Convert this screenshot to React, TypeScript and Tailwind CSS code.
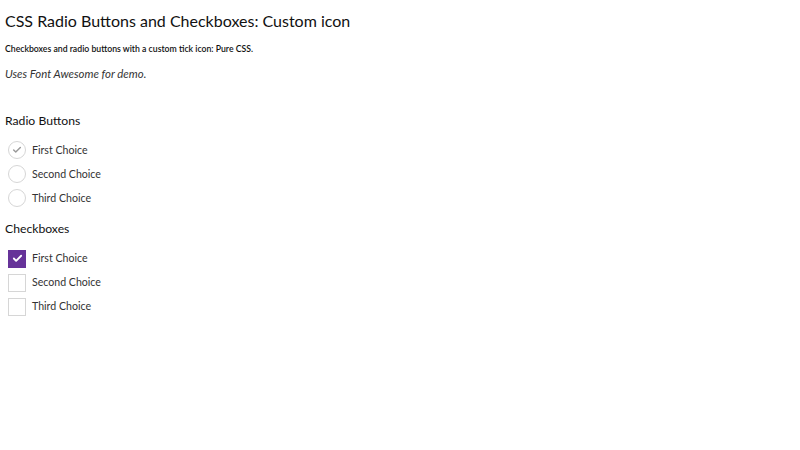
import { Check } from "lucide-react";

const radios = [
  { label: "First Choice", checked: true },
  { label: "Second Choice", checked: false },
  { label: "Third Choice", checked: false },
];

const boxes = [
  { label: "First Choice", checked: true },
  { label: "Second Choice", checked: false },
  { label: "Third Choice", checked: false },
];

function Radio({ label, checked }: { label: string; checked: boolean }) {
  return (
    <label className="flex h-6 items-center gap-[6px]">
      <span className="flex h-[18px] w-[18px] items-center justify-center rounded-full border border-[#d6d6d6] bg-white">
        {checked && <Check className="h-[10px] w-[10px] text-[#9a9a9a]" strokeWidth={3.5} />}
      </span>
      <span className="text-[10.6px] text-[#333]">{label}</span>
    </label>
  );
}

function Box({ label, checked }: { label: string; checked: boolean }) {
  return (
    <label className="flex h-6 items-center gap-[6px]">
      <span
        className={
          checked
            ? "flex h-[18px] w-[18px] items-center justify-center border border-[#663399] bg-[#663399]"
            : "flex h-[18px] w-[18px] items-center justify-center border border-[#d6d6d6] bg-white"
        }
      >
        {checked && <Check className="h-[11px] w-[11px] text-white" strokeWidth={4} />}
      </span>
      <span className="text-[10.6px] text-[#333]">{label}</span>
    </label>
  );
}

export default function App() {
  return (
    <div className="min-h-[450px] bg-white px-[5px] pt-[10px] font-['Lato',sans-serif] text-[#111]">
      <h1 className="text-[16px] leading-[22px]">CSS Radio Buttons and Checkboxes: Custom icon</h1>
      <p className="mt-[10px] text-[8.7px] font-semibold">Checkboxes and radio buttons with a custom tick icon: Pure CSS.</p>
      <p className="mt-[10px] text-[11.4px] italic text-[#333]">Uses Font Awesome for demo.</p>

      <h2 className="mt-[30px] text-[12.2px]">Radio Buttons</h2>
      <div className="mt-[8px] flex flex-col pl-[3px]">
        {radios.map((r) => (
          <Radio key={r.label} {...r} />
        ))}
      </div>

      <h2 className="mt-[10px] text-[12.2px]">Checkboxes</h2>
      <div className="mt-[8px] flex flex-col pl-[3px]">
        {boxes.map((b) => (
          <Box key={b.label} {...b} />
        ))}
      </div>
    </div>
  );
}
